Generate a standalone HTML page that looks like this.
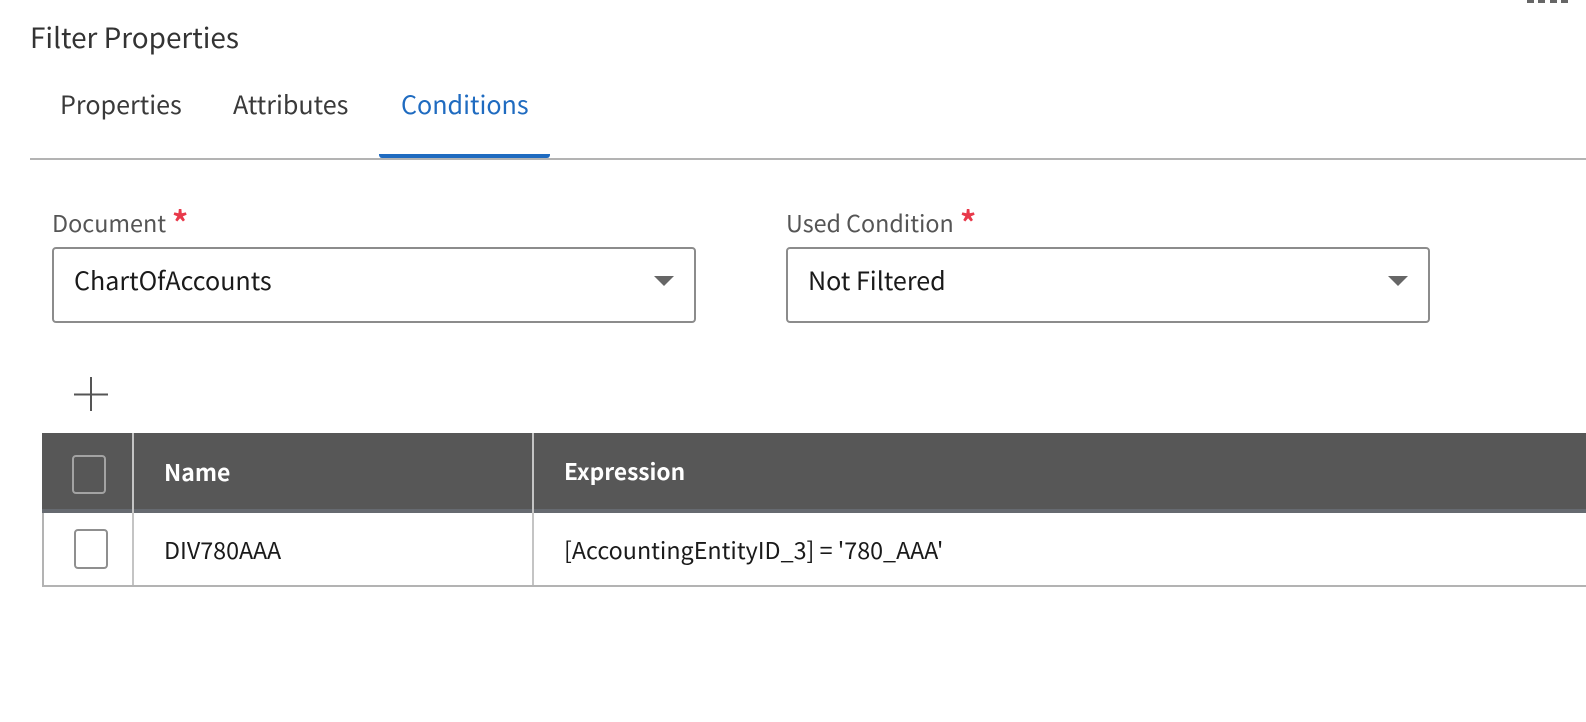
<!DOCTYPE html>
<html><head><meta charset="utf-8"><style>
html,body{margin:0;padding:0;background:#fff}
body{width:1586px;height:722px;position:relative;overflow:hidden;font-family:"Noto Sans CJK SC","Liberation Sans",sans-serif;}
.a{position:absolute;white-space:nowrap;line-height:1}
.b{position:absolute}
</style></head><body>
<div class="b" style="left:1527px;top:0;width:7px;height:3px;background:#666"></div>
<div class="b" style="left:1538px;top:0;width:7px;height:3px;background:#666"></div>
<div class="b" style="left:1550px;top:0;width:7px;height:3px;background:#666"></div>
<div class="b" style="left:1561px;top:0;width:7px;height:3px;background:#666"></div>
<div class="a" style="left:30px;top:24px;font-size:27.900px;color:#333">Filter Properties</div>
<div class="a" style="left:60px;top:92px;font-size:25.100px;color:#3a3a3a">Properties</div>
<div class="a" style="left:233px;top:92px;font-size:25.100px;color:#3a3a3a">Attributes</div>
<div class="a" style="left:401px;top:92px;font-size:25.100px;color:#1f6bc0">Conditions</div>
<div class="b" style="left:30px;top:158px;width:1556px;height:2px;background:#b3b3b3"></div>
<div class="b" style="left:379px;top:154px;width:171px;height:4px;background:#1f6bc0;border-radius:0 0 3px 3px"></div>

<div class="a" style="left:52px;top:211px;font-size:23.400px;color:#555">Document</div>
<div class="a" style="left:172px;top:206px;font-size:32px;font-weight:700;color:#e8394a">*</div>
<div class="b" style="left:52px;top:247px;width:640px;height:72px;border:2px solid #8c8c8c;border-radius:4px"></div>
<div class="a" style="left:74px;top:268px;font-size:25.100px;color:#1a1a1a">ChartOfAccounts</div>
<svg class="b" style="left:653px;top:275px" width="22" height="12"><path d="M1 1H21L11 11Z" fill="#666"/></svg>

<div class="a" style="left:786px;top:211px;font-size:23.300px;color:#555">Used Condition</div>
<div class="a" style="left:960px;top:206px;font-size:32px;font-weight:700;color:#e8394a">*</div>
<div class="b" style="left:786px;top:247px;width:640px;height:72px;border:2px solid #8c8c8c;border-radius:4px"></div>
<div class="a" style="left:808px;top:268px;font-size:25.100px;color:#1a1a1a">Not Filtered</div>
<svg class="b" style="left:1387px;top:275px" width="22" height="12"><path d="M1 1H21L11 11Z" fill="#666"/></svg>

<svg class="b" style="left:74px;top:377px" width="36" height="36"><path d="M0 17.500H34M17 0V34" stroke="#555" stroke-width="2" fill="none"/></svg>

<div class="b" style="left:42px;top:433px;width:1544px;height:76px;background:#575757"></div>
<div class="b" style="left:42px;top:509px;width:1544px;height:4px;background:#666a70"></div>
<div class="b" style="left:132px;top:433px;width:2px;height:153px;background:#c4c4c4"></div>
<div class="b" style="left:532px;top:433px;width:2px;height:153px;background:#c4c4c4"></div>
<div class="b" style="left:72px;top:455px;width:30px;height:35px;border:2px solid #a3a3a3;border-radius:4px"></div>
<div class="a" style="left:164px;top:460px;font-size:23px;font-weight:700;color:#fff">Name</div>
<div class="a" style="left:564px;top:460px;font-size:22.700px;font-weight:700;color:#fff">Expression</div>

<div class="b" style="left:42px;top:513px;width:2px;height:73px;background:#b3b3b3"></div>
<div class="b" style="left:42px;top:585px;width:1544px;height:2px;background:#b3b3b3"></div>
<div class="b" style="left:74px;top:529px;width:30px;height:36px;border:2px solid #8f8f8f;border-radius:4px"></div>
<div class="a" style="left:164px;top:538px;font-size:23.300px;color:#1a1a1a">DIV780AAA</div>
<div class="a" style="left:564px;top:538px;font-size:23.300px;color:#1a1a1a">[AccountingEntityID_3] = '780_AAA'</div>
</body></html>
